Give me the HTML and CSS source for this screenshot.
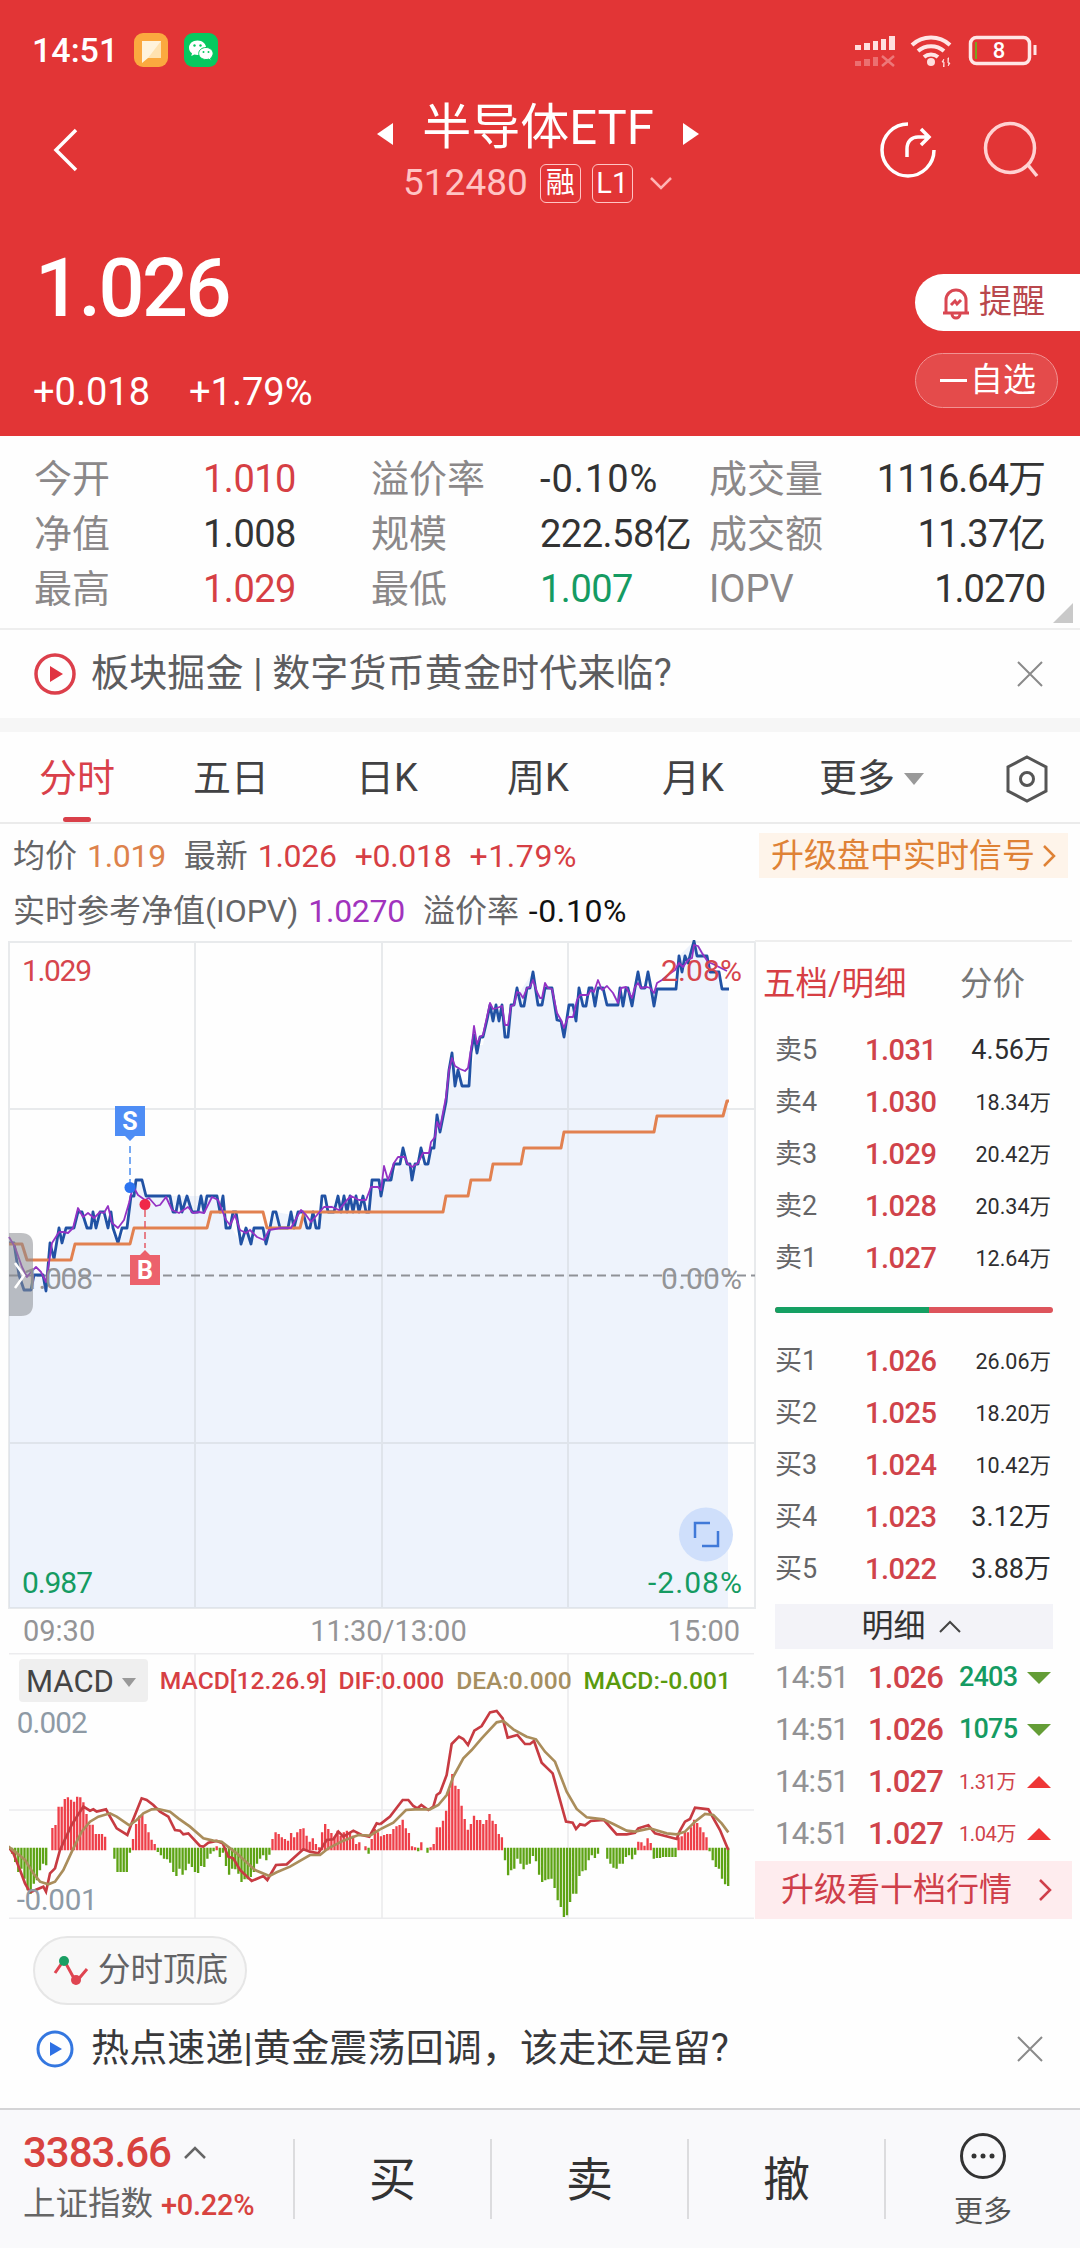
FILE: index.html
```html
<!DOCTYPE html>
<html lang="zh-CN">

<head>
    <meta charset="UTF-8">
    <meta name="viewport" content="width=device-width, initial-scale=1.0">
    <title>半导体ETF 512480</title>
    <link rel="stylesheet" href="styles.css">
</head>

<body>
    <header class="header">
        <div class="status">
            <span class="clock">14:51</span>
            <svg class="app-icon" width="34" height="34" viewBox="0 0 34 34">
                <rect width="34" height="34" rx="9" fill="#fba93f" />
                <path d="M8 8h19v17H14l-6 5z" fill="#fff3dc" />
                <path d="M27 8v17H14z" fill="#ffe2b0" />
            </svg>
            <svg class="app-icon" width="34" height="34" viewBox="0 0 34 34">
                <rect width="34" height="34" rx="9" fill="#06c95f" />
                <path d="M13.5 7.5C8.500 7.500 5 10.700 5 14.800c0 2.300 1.200 4.200 3 5.500L7.300 23l3-1.600c1 .3 2 .5 3.200.5 5 0 8.600-3.100 8.600-7.100s-3.600-7.300-8.600-7.300z" fill="#fff" />
                <path d="M22 14.500c-4.200 0-7.300 2.700-7.300 6s3.100 6 7.300 6c.9 0 1.800-.1 2.600-.4l2.600 1.400-.6-2.400c1.600-1.100 2.500-2.700 2.500-4.600 0-3.300-3-6-7.100-6z" fill="#fff" stroke="#06c95f" />
                <g fill="#06c95f"><circle cx="10.500" cy="12.500" r="1.200" /><circle cx="16.500" cy="12.500" r="1.200" /><circle cx="19.500" cy="19" r="1" /><circle cx="24.500" cy="19" r="1" /></g>
            </svg>
            <svg class="signals" width="184" height="34" viewBox="0 0 184 34">
                <g fill="#ffdede">
                    <path d="M1 12h6v5H1zM10 10h6v7h-6zM19 8h5v9h-5zM27 6h5v11h-5zM35 3h6v14h-6z" />
                    <path d="M1 28h6v5H1zM10 26h6v7h-6zM19 24h5v9h-5z" opacity=".35" />
                    <circle cx="77" cy="29" r="4" />
                    <path d="M90 26l-2 3h2v5h-1M94 33l2-3h-2v-5h1" stroke="#ffdede" />
                </g>
                <path d="M28 23l12 10M40 23L28 33" stroke="#ffdede" stroke-width="2.500" opacity=".4" />
                <g fill="none" stroke="#ffe6e6" stroke-width="4">
                    <path d="M58 12a28 28 0 0 1 38 0M64 18a20 20 0 0 1 26 0M70 24a11 11 0 0 1 14 0" />
                    <rect x="116.500" y="4.500" width="59" height="26" rx="6" stroke-width="3.500" />
                    <path d="M181 12v10" stroke-width="3" />
                </g>
                <path d="M121 9h2v17h-2z" fill="#7ba21f" />
                <text class="battery" x="145" y="25" text-anchor="middle">8</text>
            </svg>
        </div>

        <nav class="nav">
            <svg class="back" width="26" height="44" viewBox="0 0 26 44"><path d="M23 2L3 22l20 20" /></svg>
            <div class="title-box">
                <div class="title">
                    <svg width="16" height="24"><path d="M16 1v22L0 12z" /></svg>
                    <h1>半导体ETF</h1>
                    <svg width="16" height="24"><path d="M0 1v22l16-11z" /></svg>
                </div>
                <div class="subtitle">
                    <span class="code">512480</span>
                    <span class="tag">融</span>
                    <span class="tag">L1</span>
                    <svg width="24" height="14" viewBox="0 0 24 14"><path d="M2 2l10 10L22 2" /></svg>
                </div>
            </div>
            <svg class="share" width="58" height="58" viewBox="0 0 58 58">
                <path d="M29 3A26 26 0 1 0 55 29" />
                <path d="M28 36V28c0-8 5-12 11-12h10M42 8l8 8-8 8" />
            </svg>
            <svg class="search" width="56" height="58" viewBox="0 0 56 58">
                <circle cx="27" cy="27" r="24.500" /><path d="M45 44l9 11" />
            </svg>
        </nav>

        <section class="quote">
            <div>
                <div class="price">1.026</div>
                <div class="change"><span>+0.018</span><span>+1.79%</span></div>
            </div>
            <div class="actions">
                <div class="remind">
                    <svg width="34" height="34" viewBox="0 0 34 34">
                        <path d="M4 27h26M7 27V14a10 10 0 0 1 20 0v13M13 28a4 4 0 0 0 8 0" />
                        <path d="M12 19l4-4 2 3 4-4" />
                    </svg>
                    提醒
                </div>
                <div class="favorite"><i></i>自选</div>
            </div>
        </section>
    </header>

    <section class="stats">
        <span>今开</span><b class="red">1.010</b><span>溢价率</span><b class="wide">-0.10%</b><span>成交量</span><b class="end">1116.64万</b>
        <span>净值</span><b>1.008</b><span>规模</span><b>222.58亿</b><span>成交额</span><b class="end">11.37亿</b>
        <span>最高</span><b class="red">1.029</b><span>最低</span><b class="green">1.007</b><span>IOPV</span><b class="end">1.0270</b>
        <i class="corner"></i>
    </section>

    <div class="news">
        <svg width="42" height="42" viewBox="0 0 42 42"><circle cx="21" cy="21" r="19" fill="none" stroke="#dc3f4b" stroke-width="3.500" /><path d="M16 13l13 8-13 8z" fill="#e03341" /></svg>
        <p>板块掘金 | 数字货币黄金时代来临?</p>
        <svg class="close" width="26" height="26" viewBox="0 0 26 26"><path d="M1 1l24 24M25 1L1 25" /></svg>
    </div>

    <nav class="tabs">
        <span class="active">分时</span>
        <span>五日</span>
        <span>日K</span>
        <span>周K</span>
        <span>月K</span>
        <span class="more">更多 <i></i></span>
        <svg width="42" height="48" viewBox="0 0 42 48"><path d="M21 2l19 10v24L21 46 2 36V12z" /><circle cx="21" cy="24" r="6.500" /></svg>
    </nav>

    <section class="info">
        <div class="info-lines">
            <p>均价 <b class="orange">1.019</b><span class="second">最新</span> <b class="red">1.026</b><b class="red gap">+0.018</b><b class="red gap wide">+1.79%</b></p>
            <p>实时参考净值(IOPV) <b class="purple">1.0270</b><span class="second">溢价率</span> <b class="black wide">-0.10%</b></p>
        </div>
        <div class="upgrade">升级盘中实时信号
            <svg width="13" height="24" viewBox="0 0 13 24"><path d="M1 2l10 10L1 22" /></svg>
        </div>
    </section>

    <main class="board">
        <div class="charts">
            <svg class="trend" width="750" height="670" viewBox="7 940 750 670">
                <path class="area" d="M9 1243L18 1259 24 1290H31L34 1275H43L46 1291 50 1243 54 1259 59 1228H74L78 1212H82L87 1228 93 1212 96 1228 100 1212 108 1228 118 1243 127 1228 131 1196 136 1180H142L146 1196H217L223 1212 241 1244 246 1228H270L276 1212 319 1220 325 1205H369L372 1180H391L400 1164H428L437 1115 446 1102 452 1053 458 1080H469L477 1045H483L490 1005 499 1010 508 1037 511 1005 533 972 538 1005 545 988H552L564 1037 569 1005 579 1000H620L638 985 657 989H676L679 956 694 941 707 956 722 989H728V1608H9z" />
                <g class="grid">
                    <path d="M9 942H755V1608H9zM195 942V1608M382 942V1608M568 942V1608M9 1109H755M9 1443H755" />
                    <path class="dash" d="M9 1275.500H755" />
                </g>
                <polyline class="line blue-line" points="9,1243 14,1243 19,1275 24,1290 31,1290 34,1275 43,1275 46,1291 50,1243 54,1259 59,1228 62,1243 66,1228 74,1228 78,1212 82,1212 87,1228 91,1228 93,1212 96,1228 100,1212 104,1212 108,1228 111,1212 113,1228 118,1243 122,1228 127,1228 131,1196 134,1196 136,1180 142,1180 146,1196 170,1196 173,1212 176,1212 179,1196 182,1212 187,1196 192,1212 198,1212 201,1196 204,1212 207,1196 217,1196 220,1212 223,1196 226,1228 230,1228 233,1212 236,1212 241,1244 246,1228 251,1244 254,1228 263,1228 266,1244 270,1228 273,1212 276,1212 280,1228 288,1228 291,1212 294,1228 298,1212 303,1212 307,1228 310,1228 313,1212 316,1228 319,1228 322,1196 325,1196 328,1212 334,1212 338,1196 341,1212 344,1196 347,1212 350,1196 353,1212 356,1196 359,1212 363,1196 366,1212 369,1212 372,1180 379,1180 381,1196 384,1180 391,1180 394,1164 400,1164 403,1148 407,1164 410,1164 412,1180 415,1164 418,1164 421,1148 425,1164 428,1164 431,1148 434,1148 437,1115 440,1132 446,1102 449,1070 452,1053 455,1086 458,1070 462,1086 469,1086 471,1053 474,1035 477,1053 480,1037 483,1037 487,1020 490,1005 493,1021 496,1005 499,1021 502,1005 505,1037 508,1037 511,1005 514,1005 517,988 521,1006 524,1006 527,988 530,988 533,972 538,1005 542,1005 545,988 552,988 557,1020 561,1021 564,1037 569,1005 573,1005 576,1021 579,988 583,1006 586,1006 589,988 592,988 595,1006 598,988 603,988 607,1005 618,1005 620,988 623,1006 626,988 628,988 632,1006 635,988 638,972 641,988 645,988 648,972 651,988 654,1006 657,989 676,989 679,956 682,972 685,956 688,963 694,941 697,956 707,956 710,972 719,972 722,989 729,989" />
                <polyline class="line avg-line" points="9,1244 22,1244 27,1260 71,1260 75,1244 130,1244 134,1228 207,1228 211,1212 263,1212 267,1228 300,1228 304,1212 443,1212 446,1196 468,1196 471,1180 490,1180 493,1164 521,1164 524,1148 561,1148 564,1132 654,1132 657,1116 723,1116 727,1101 729,1101" />
                <polyline class="line iopv-line" points="9,1237 15,1247 22,1267 27,1277 31,1272 36,1267 41,1272 46,1282 52,1243 59,1232 63,1232 68,1233 73,1228 78,1208 83,1217 88,1213 94,1218 100,1212 104,1213 108,1206 112,1223 118,1228 124,1220 129,1203 133,1186 138,1195 145,1200 149,1198 156,1206 160,1205 166,1197 172,1210 179,1213 188,1207 193,1213 199,1212 204,1213 212,1197 218,1200 222,1210 226,1220 230,1225 235,1215 240,1230 246,1233 250,1230 257,1237 264,1240 269,1230 281,1228 291,1228 297,1217 301,1210 306,1215 311,1222 317,1215 324,1207 332,1207 339,1210 347,1200 351,1196 359,1200 366,1200 371,1187 378,1187 381,1190 384,1166 388,1180 394,1163 398,1157 405,1157 407,1163 412,1167 418,1163 423,1153 429,1153 431,1142 435,1137 437,1122 440,1128 446,1097 449,1070 452,1058 455,1066 460,1069 465,1071 468,1068 472,1043 474,1026 477,1044 480,1037 483,1035 490,1003 493,1009 497,1008 502,1006 505,1025 508,1025 511,1006 514,1005 517,992 520,993 523,998 527,988 530,987 533,980 537,992 540,998 542,998 545,983 548,988 552,989 557,1013 561,1020 564,1028 568,1017 573,1017 577,1000 580,995 588,995 591,990 594,992 598,980 602,990 607,986 613,993 618,1003 621,988 626,987 632,998 635,987 638,983 641,988 647,987 650,988 654,993 657,983 662,980 668,975 675,970 679,963 683,967 688,960 692,958 694,945 698,946 702,953 708,962 713,964 719,967 727,971" />
                <g class="chart-label">
                    <text class="t-red" x="22" y="981" textLength="70">1.029</text>
                    <text class="t-red" x="661" y="981" textLength="81">2.08%</text>
                    <text class="t-gray" x="23" y="1289" textLength="70">1.008</text>
                    <text class="t-gray" x="661" y="1289" textLength="81">0.00%</text>
                    <text class="t-green" x="22" y="1593" textLength="71">0.987</text>
                    <text class="t-green" x="648" y="1593" textLength="94">-2.08%</text>
                </g>
                <!-- trade markers -->
                <path d="M130 1146V1184" stroke="#4a8df0" stroke-width="1.500" stroke-dasharray="7 4" />
                <circle cx="130" cy="1187.500" r="5.500" fill="#2c74f0" />
                <path d="M115 1106h30v30h-10l-5 5-5-5h-10z" fill="#4e8df5" />
                <text class="mark" x="130" y="1130">S</text>
                <path d="M145 1210V1248" stroke="#e45b66" stroke-width="1.500" stroke-dasharray="7 4" />
                <circle cx="145" cy="1204.500" r="5.500" fill="#f02849" />
                <path d="M130 1255h10l5-5 5 5h10v30h-30z" fill="#ec616c" />
                <text class="mark" x="145" y="1279">B</text>
                <!-- drawer handle -->
                <path d="M9 1233h12q12 0 12 12v59q0 12-12 12H9z" fill="#8b8d92" opacity=".55" />
                <path d="M15 1263l9 12.500-9 12.500" fill="none" stroke="#fff" stroke-width="2.500" />
                <circle cx="706" cy="1534.500" r="27" fill="#cfdffb" />
                <path d="M695 1538v-15h15M702 1546h16v-15" fill="none" stroke="#4079d8" stroke-width="2.500" />
            </svg>

            <div class="times"><span>09:30</span><span class="noon">11:30/13:00</span><span>15:00</span></div>

            <div class="macd">
                <div class="legend">
                    <span class="picker">MACD <i></i></span>
                    <span class="red">MACD[12.26.9]</span>
                    <span class="red">DIF:0.000</span>
                    <span class="dea">DEA:0.000</span>
                    <span class="olive">MACD:-0.001</span>
                </div>
                <svg class="macd-chart" width="746" height="266" viewBox="27 39 2238 798">
                    <path class="macd-grid" d="M27 41H2262M27 510H2262M27 835H2262M585 41V835M1146 41V835M1704 41V835" />
                    <path id="barsUp" class="bar-up" />
                    <path id="barsDown" class="bar-down" />
                    <g class="dif">
                        <polyline points="25,620 40,640 60,690 75,730 90,757 130,740 138,755 150,700 165,685 180,630 215,555 240,515 250,500 270,512 280,508 290,515 318,508 330,530 350,565 382,585 395,550 425,475 440,480 460,495 480,515 505,530 525,570 540,572 550,583 565,580 600,618 610,620 625,608 650,603 668,610 685,650 700,655 720,690 755,723 790,708 802,720 828,675 860,673 880,655 910,628 930,635 955,640 980,600 1000,598 1015,575 1030,590 1060,572 1085,585 1108,590 1130,550 1140,553" />
                        <polyline transform="translate(1140)" points="0,553 30,530 45,510 68,480 85,480 100,498 112,505 124,495 145,510 160,500 170,465 180,458 200,405 215,312 237,290 250,297 264,315 283,272 305,258 330,217 350,213 368,235 383,293 412,285 435,312 450,312 462,303 485,368 518,400 540,480 558,545 578,548 588,567 600,553 615,556 632,543 672,540 710,583 740,583 765,578 775,565 805,556 825,580 890,597 900,572 915,545 930,537 945,503 985,508 1020,570 1045,630" />
                    </g>
                    <g class="dea-line">
                        <polyline points="25,620 45,635 75,660 100,700 120,725 145,733 165,725 190,690 220,625 245,575 270,545 295,530 330,520 350,530 388,556 410,540 430,520 455,508 475,507 510,515 535,535 570,560 610,595 640,602 665,605 710,640 765,690 808,708 830,697 870,680 930,645 960,645 985,625 1030,602 1075,585 1110,587 1140,568" />
                        <polyline transform="translate(1140)" points="0,568 40,548 78,510 105,508 150,508 175,495 200,465 220,410 250,355 275,330 305,295 350,247 370,243 400,268 440,290 468,298 495,335 525,365 560,455 590,507 620,532 670,538 700,552 740,572 765,575 810,565 860,580 890,583 915,575 945,545 975,522 1000,525 1025,550 1045,577" />
                    </g>
                    <text class="scale" x="50" y="278" textLength="213">0.002</text>
                    <text class="scale" x="50" y="811" textLength="243">-0.001</text>
                </svg>
            </div>
        </div>

        <aside class="depth">
            <div class="depth-tabs"><span class="red">五档/明细</span><span>分价</span></div>
            <div class="level"><span>卖5</span><b>1.031</b><em>4.56万</em></div>
            <div class="level"><span>卖4</span><b>1.030</b><em class="small">18.34万</em></div>
            <div class="level"><span>卖3</span><b>1.029</b><em class="small">20.42万</em></div>
            <div class="level"><span>卖2</span><b>1.028</b><em class="small">20.34万</em></div>
            <div class="level"><span>卖1</span><b>1.027</b><em class="small">12.64万</em></div>
            <div class="ratio"><i></i></div>
            <div class="level"><span>买1</span><b>1.026</b><em class="small">26.06万</em></div>
            <div class="level"><span>买2</span><b>1.025</b><em class="small">18.20万</em></div>
            <div class="level"><span>买3</span><b>1.024</b><em class="small">10.42万</em></div>
            <div class="level"><span>买4</span><b>1.023</b><em>3.12万</em></div>
            <div class="level"><span>买5</span><b>1.022</b><em>3.88万</em></div>
            <div class="detail">明细 <svg width="24" height="14" viewBox="0 0 24 14"><path d="M2 12L12 2l10 10" /></svg></div>
            <div class="tick"><span>14:51</span><b>1.026</b><em class="green">2403</em><i class="down"></i></div>
            <div class="tick"><span>14:51</span><b>1.026</b><em class="green">1075</em><i class="down"></i></div>
            <div class="tick"><span>14:51</span><b>1.027</b><em class="small">1.31万</em><i class="up"></i></div>
            <div class="tick"><span>14:51</span><b>1.027</b><em class="small">1.04万</em><i class="up"></i></div>
            <div class="ten">升级看十档行情 <svg width="13" height="24" viewBox="0 0 13 24"><path d="M1 2l10 10L1 22" /></svg></div>
        </aside>
    </main>

    <div class="chip">
        <svg width="36" height="32" viewBox="0 0 36 32">
            <path d="M2 18l9-13 12 22 11-13" fill="none" stroke="#df4551" stroke-width="3" />
            <circle cx="11" cy="6" r="5" fill="#1a9e63" /><circle cx="23" cy="25" r="5" fill="#df4551" />
        </svg>
        分时顶底
    </div>

    <div class="news news-hot">
        <svg width="42" height="42" viewBox="0 0 42 42"><circle cx="21" cy="21" r="17" fill="none" stroke="#3477e0" stroke-width="3" /><path d="M16 14l12 7-12 7z" fill="#2d70e4" /></svg>
        <p>热点速递|黄金震荡回调，该走还是留?</p>
        <svg class="close" width="26" height="26" viewBox="0 0 26 26"><path d="M1 1l24 24M25 1L1 25" /></svg>
    </div>

    <footer class="footer">
        <div class="index">
            <p class="index-value">3383.66 <svg width="24" height="14" viewBox="0 0 24 14"><path d="M2 12L12 2l10 10" /></svg></p>
            <p class="index-name">上证指数 <b>+0.22%</b></p>
        </div>
        <div class="trade">买</div>
        <div class="trade">卖</div>
        <div class="trade">撤</div>
        <div class="menu">
            <svg width="48" height="48" viewBox="0 0 48 48"><circle cx="24" cy="24" r="21.500" fill="none" stroke="#333" stroke-width="3" /><g fill="#333"><circle cx="15" cy="24" r="2.500" /><circle cx="24" cy="24" r="2.500" /><circle cx="33" cy="24" r="2.500" /></g></svg>
            更多
        </div>
    </footer>

    <script>
        // MACD histogram, one value per minute
        var macd = [
            0, -15, -40, -70, -60, -90, -125, -135, -105, -95, -65, -45, -50, 0, 63, 72, 127, 127, 150, 155,
            148, 142, 157, 155, 140, 105, 73, 73, 45, 45, 45, 37, 0, 0, -30, -70, -70, -70, -70, -12,
            30, 75, 100, 103, 75, 50, 28, 15, -10, -20, -30, -32, -42, -70, -82, -60, -78, -65, -45, -55,
            -70, -73, -52, -55, -30, -15, -8, 8, -25, -12, -52, -78, -60, -62, -75, -100, -92, -92, -85, -70,
            -45, -30, -20, -35, -18, 30, 50, 45, 35, 30, 25, 48, 35, 50, 60, 62, 40, 22, 32, 15,
            5, 50, 75, 60, 48, 35, 55, 40, 50, 55, 50, 40, 15, 20, 0, 8, -15, 30, 60, 50,
            38, 42, 45, 45, 60, 68, 72, 88, 62, 48, 8, 5, -8, 20, 0, -12, 5, 15, 65, 65,
            85, 115, 180, 225, 190, 180, 130, 90, 58, 75, 100, 87, 87, 75, 87, 105, 85, 75, 45, 35,
            -35, -80, -65, -60, -30, -45, -62, -48, -45, -22, -38, -78, -100, -95, -92, -90, -118, -155, -175, -205,
            -200, -160, -135, -135, -82, -68, -65, -35, -20, -28, -15, 0, 0, -30, -45, -57, -60, -45, -45, -25,
            -20, -32, -18, 22, 20, 10, 32, 18, -30, -28, -28, -25, -25, -25, -25, -25, 35, 38, 52, 50,
            65, 88, 78, 65, 50, 35, -8, -35, -55, -60, -90, -107, -112
        ];
        var up = '';
        var down = '';
        macd.forEach(function (value, i) {
            var x = (27 + i * 9.3).toFixed(1);
            if (value > 0) {
                up += 'M' + x + ' 631v' + (-value - 4);
            } else if (value < 0) {
                down += 'M' + x + ' 623v' + (-value + 3);
            }
        });
        document.getElementById('barsUp').setAttribute('d', up);
        document.getElementById('barsDown').setAttribute('d', down);
    </script>
</body>

</html>
```
FILE: styles.css
```css
* {
    box-sizing: border-box;
}

body {
    margin: 0;
    width: 1080px;
    height: 2248px;
    overflow: hidden;
    display: flex;
    flex-direction: column;
    background: #fefefe;
    color: #333;
    font-family: Roboto, "Noto Sans CJK SC", sans-serif;
    line-height: 1.3;
}

p,
h1 {
    margin: 0;
    font-weight: 400;
}

b,
em,
i {
    font-style: normal;
    font-weight: 400;
}

svg {
    display: block;
    flex-shrink: 0;
}

.red {
    color: #d63f44;
}

.green {
    color: #159b62;
}

.orange {
    color: #dd824c;
}

.purple {
    color: #a133bd;
}

.black {
    color: #111;
}

/* header */
.header {
    height: 436px;
    flex-shrink: 0;
    background: #e23536;
    color: #fff;
}

.status {
    display: flex;
    align-items: center;
    height: 100px;
    padding: 0 42px 0 32px;
}

.clock {
    width: 86px;
    margin-right: 16px;
    font-size: 34px;
    font-weight: 500;
}

.app-icon {
    margin-right: 16px;
}

.signals {
    margin-left: auto;
}

.battery {
    fill: #fff;
    font-size: 22px;
    font-weight: 500;
}

.nav {
    display: flex;
    align-items: center;
    height: 110px;
    margin-top: -3px;
    padding: 0 40px 0 53px;
    fill: none;
    stroke: #fff;
    stroke-width: 3.5;
}

.back,
.share,
.search {
    margin-bottom: 5px;
}

.title-box {
    width: 330px;
    margin-left: 294px;
    color: #fff;
    stroke: none;
}

.title {
    display: flex;
    align-items: center;
    justify-content: center;
    gap: 29px;
    height: 62px;
    fill: #fff;
}

.title svg {
    margin-top: 12px;
}

.title h1 {
    font-size: 49px;
    line-height: 62px;
    white-space: nowrap;
}

.subtitle {
    display: flex;
    align-items: center;
    gap: 11px;
    height: 48px;
    padding-left: 30px;
    stroke: #ffb4b4;
    stroke-width: 2.5;
}

.subtitle svg {
    margin-left: 5px;
}

.code {
    margin-right: 1px;
    color: #ffc4c4;
    font-size: 37px;
}

.tag {
    width: 41px;
    height: 39px;
    border: 1.5px solid #ffc4c4;
    border-radius: 6px;
    font-size: 29px;
    line-height: 36px;
    text-align: center;
}

.share {
    margin-left: 176px;
}

.search {
    margin-left: 46px;
    stroke: #ffd2d2;
}

.quote {
    display: flex;
    justify-content: space-between;
}

.price {
    margin-top: 31px;
    padding-left: 35px;
    font-size: 81px;
    font-weight: 500;
    line-height: 102px;
    letter-spacing: -2.5px;
}

.change {
    display: flex;
    gap: 39px;
    margin-top: 31px;
    padding-left: 33px;
    font-size: 38px;
    line-height: 42px;
}

.actions {
    width: 165px;
    padding-top: 67px;
    font-size: 33px;
}

.remind {
    display: flex;
    align-items: center;
    gap: 6px;
    height: 57px;
    padding-left: 24px;
    border-radius: 29px 0 0 29px;
    background: #fff;
    color: #b9474c;
    white-space: nowrap;
    fill: none;
    stroke: #d94752;
    stroke-width: 3;
}

.favorite {
    display: flex;
    align-items: center;
    gap: 3px;
    width: 143px;
    height: 55px;
    margin-top: 22px;
    padding-left: 24px;
    border: 1.5px solid #f19292;
    border-radius: 28px;
    background: #e44b4b;
}

.favorite i {
    width: 27px;
    height: 3px;
    background: #fff;
}

/* key figures */
.stats {
    position: relative;
    display: grid;
    grid-template-columns: 169px 168px 169px 169px 118px 218px;
    grid-auto-rows: 55px;
    flex-shrink: 0;
    height: 194px;
    padding: 16px 0 0 34px;
    border-bottom: 2px solid #eee;
    font-size: 38px;
    line-height: 55px;
    white-space: nowrap;
}

.stats span {
    color: #8b8889;
}

.stats b {
    letter-spacing: -.5px;
}

.stats .wide {
    letter-spacing: 1px;
}

.stats .end {
    text-align: right;
    letter-spacing: -1px;
}

.corner {
    position: absolute;
    right: 7px;
    bottom: 5px;
    border: 10.5px solid;
    border-color: transparent #c9c9c9 #c9c9c9 transparent;
}

.news {
    display: flex;
    align-items: center;
    flex-shrink: 0;
    height: 88px;
    padding: 0 37px 0 34px;
    color: #5c5c5e;
    font-size: 38px;
}

.news p {
    margin-left: 15px;
    letter-spacing: .15px;
}

.close {
    margin-left: auto;
    stroke: #8a8a8a;
    stroke-width: 2;
}

.tabs {
    display: grid;
    grid-template-columns: 154px 163px 151px 155px 157px 187px 42px;
    align-items: center;
    flex-shrink: 0;
    height: 106px;
    padding: 3px 0 0 39px;
    border-top: 14px solid #f6f6f6;
    border-bottom: 2px solid #ebebeb;
    color: #414143;
    font-size: 38px;
    fill: none;
    stroke: #555;
    stroke-width: 3;
}

.tabs span {
    position: relative;
}

.tabs .active {
    color: #d9404a;
}

.active::after {
    content: "";
    position: absolute;
    left: 24px;
    bottom: -19px;
    width: 28px;
    height: 5px;
    border-radius: 3px;
    background: #d9404a;
}

.more i,
.picker i {
    display: inline-block;
    border: 10px solid transparent;
    border-top: 12px solid #999;
    border-bottom: 0;
    vertical-align: 6px;
}

.info {
    display: flex;
    justify-content: space-between;
    flex-shrink: 0;
    height: 116px;
    padding: 5px 12px 0 13px;
    color: #656567;
    font-size: 32px;
    line-height: 55px;
    white-space: nowrap;
}

.info b {
    margin-left: 2px;
    letter-spacing: -.3px;
}

.info b.gap {
    margin-left: 18px;
}

.info b.wide {
    letter-spacing: .6px;
}

.second {
    margin-left: 18px;
}

.upgrade {
    display: flex;
    align-items: center;
    gap: 8px;
    height: 45px;
    margin-top: 4px;
    padding: 0 12px;
    background: #fef4ea;
    color: #df8236;
    font-size: 33px;
    fill: none;
    stroke: #df8236;
    stroke-width: 2.5;
}

/* charts and order book */
.board {
    display: flex;
    flex-shrink: 0;
    height: 980px;
}

.charts {
    width: 755px;
    padding-left: 7px;
}

.area {
    fill: #eef3fc;
}

.grid {
    fill: none;
    stroke: #c8ccd2;
    stroke-opacity: .4;
    stroke-width: 2;
}

.grid .dash {
    stroke: #8f9297;
    stroke-opacity: 1;
    stroke-dasharray: 9 5;
}

.line {
    fill: none;
    stroke-linejoin: round;
}

.blue-line {
    stroke: #2152a4;
    stroke-width: 2.8;
}

.avg-line {
    stroke: #e28150;
    stroke-width: 3;
}

.iopv-line {
    stroke: #9432c4;
    stroke-width: 1.8;
}

.chart-label {
    font-size: 30px;
}

.t-red {
    fill: #d6454d;
}

.t-gray {
    fill: #939497;
}

.t-green {
    fill: #159b62;
}

.mark {
    fill: #fff;
    font-size: 25px;
    font-weight: 700;
    text-anchor: middle;
}

.times {
    display: flex;
    justify-content: space-between;
    padding: 0 15px 0 16px;
    color: #949496;
    font-size: 29px;
    line-height: 43px;
}

.noon {
    margin-left: 14px;
}

.macd {
    position: relative;
    margin-left: 2px;
}

.legend {
    position: absolute;
    top: 6px;
    left: 10px;
    right: 24px;
    display: flex;
    justify-content: space-between;
    height: 43px;
    font-size: 24.6px;
    font-weight: 500;
    line-height: 43px;
    white-space: nowrap;
}

.picker {
    width: 129px;
    padding-left: 7px;
    border-radius: 4px;
    background: #efefef;
    color: #444;
    font-size: 31px;
    font-weight: 400;
    line-height: 45px;
}

.picker i {
    border-width: 9px 7px 0;
    vertical-align: 5px;
}

.dea {
    color: #a68f60;
}

.olive {
    color: #599a0d;
}

.macd-grid {
    fill: none;
    stroke: #ececee;
    stroke-width: 5;
}

.bar-up {
    stroke: #ee3f49;
    stroke-width: 7;
}

.bar-down {
    stroke: #5da314;
    stroke-width: 7;
}

.dif {
    fill: none;
    stroke: #c73b42;
    stroke-width: 8;
}

.dea-line {
    fill: none;
    stroke: #aa8d5b;
    stroke-width: 8;
}

.scale {
    fill: #8e9aa5;
    font-size: 89px;
}

.depth {
    width: 317px;
    border-top: 2px solid #eee;
    white-space: nowrap;
}

.depth-tabs {
    display: flex;
    justify-content: space-between;
    padding: 0 47px 0 8px;
    height: 83px;
    color: #777;
    font-size: 32.5px;
    line-height: 84px;
}

.level,
.tick {
    display: flex;
    align-items: center;
    height: 52px;
    padding: 0 21px 0 20px;
}

.level span {
    width: 90px;
    color: #656567;
    font-size: 27px;
}

.level b,
.tick b {
    color: #d0434a;
    font-size: 29px;
    font-weight: 500;
    letter-spacing: -.5px;
}

.level em {
    margin-left: auto;
    color: #2e2e30;
    font-size: 27px;
}

.level em.small {
    font-size: 21.5px;
}

.ratio {
    height: 6px;
    margin: 22px 19px 23px 20px;
    border-radius: 3px;
    background: #dd545c;
    overflow: hidden;
}

.ratio i {
    display: block;
    width: 55.5%;
    height: 6px;
    background: #15a063;
}

.detail {
    display: flex;
    align-items: center;
    justify-content: center;
    gap: 12px;
    height: 45px;
    margin: 8px 19px 3px 20px;
    padding-right: 5px;
    background: #f3f3f8;
    font-size: 32px;
    fill: none;
    stroke: #444;
    stroke-width: 2;
}

.tick span {
    width: 93px;
    color: #929294;
    font-size: 31px;
    letter-spacing: -.7px;
}

.tick b {
    width: 91px;
    font-size: 31px;
    letter-spacing: -.8px;
}

.tick em {
    font-size: 27px;
    font-weight: 500;
    letter-spacing: -.8px;
}

.tick em.small {
    color: #d0434a;
    font-size: 20px;
    font-weight: 400;
    letter-spacing: -.4px;
}

.tick i {
    margin-left: auto;
    border: 0 solid transparent;
    border-width: 0 12px;
}

.tick .down {
    border-top: 12px solid #649d36;
}

.tick .up {
    border-bottom: 12px solid #ee3636;
}

.ten {
    display: flex;
    align-items: center;
    justify-content: space-between;
    height: 58px;
    margin-top: 1px;
    padding: 0 20px 0 26px;
    background: #feecee;
    color: #cf3f4a;
    font-size: 33px;
    fill: none;
    stroke: #cf3f4a;
    stroke-width: 2.5;
}

.chip {
    display: flex;
    align-items: center;
    gap: 9px;
    flex-shrink: 0;
    width: 214px;
    height: 69px;
    margin: 16px 0 0 33px;
    padding-left: 18px;
    border: 2px solid #e6e6e6;
    border-radius: 35px;
    background: #f8f8f8;
    color: #636365;
    font-size: 32.5px;
    white-space: nowrap;
}

.news-hot {
    height: 103px;
    padding-bottom: 15px;
    color: #38383a;
}

/* bottom bar */
.footer {
    display: flex;
    align-items: center;
    flex: 1;
    padding-bottom: 1px;
    border-top: 2px solid #d4d4d6;
    background: #f9f9fb;
}

.index {
    width: 293px;
    padding: 0 0 0 23px;
    white-space: nowrap;
}

.index-value {
    display: flex;
    align-items: center;
    gap: 12px;
    color: #d8433f;
    font-size: 42px;
    font-weight: 500;
    line-height: 52px;
    letter-spacing: -1px;
    fill: none;
    stroke: #666;
    stroke-width: 2.5;
}

.index-name {
    color: #666;
    font-size: 32.5px;
    line-height: 50px;
}

.index-name b {
    color: #d8433f;
    font-size: 29px;
    font-weight: 500;
    letter-spacing: -.3px;
}

.trade,
.menu {
    width: 197px;
    height: 80px;
    border-left: 2px solid #dcdcde;
    font-size: 47px;
    line-height: 81px;
    text-align: center;
}

.menu {
    display: flex;
    flex-direction: column;
    align-items: center;
    width: auto;
    flex: 1;
    color: #555;
    font-size: 29px;
    line-height: 42px;
}

.menu svg {
    margin: -7px 0 11px;
}
```
